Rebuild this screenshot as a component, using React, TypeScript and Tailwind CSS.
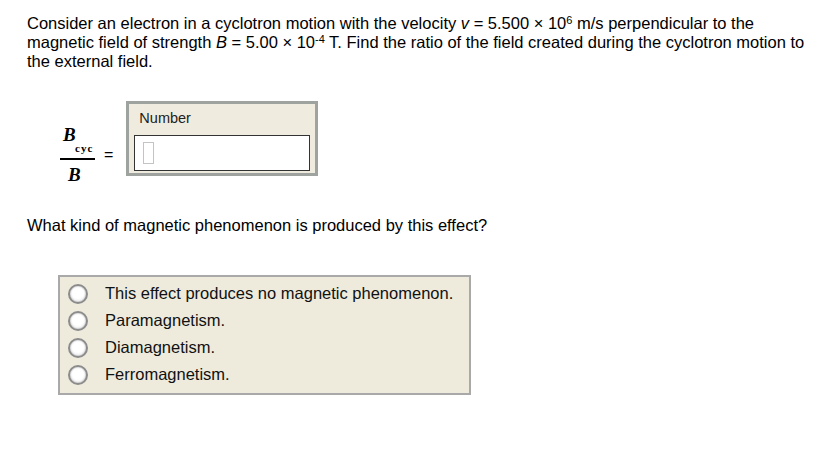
import React from 'react';

const options = [
  'This effect produces no magnetic phenomenon.',
  'Paramagnetism.',
  'Diamagnetism.',
  'Ferromagnetism.',
];

const Radio: React.FC = () => (
  <span className="w-[20px] h-[20px] rounded-full border-[2px] border-[#8c8c8c] bg-[radial-gradient(circle_at_50%_40%,#ffffff_45%,#e6e6e6_100%)] shadow-[inset_0_0_2px_rgba(0,0,0,0.35)] shrink-0" />
);

export default function App() {
  return (
    <div className="w-[823px] h-[459px] bg-white text-black font-['Liberation_Sans',Arial,sans-serif] text-[16.5px] leading-[19px]">
      <div className="pt-[14px] pl-[27px]">
        <p>
          Consider an electron in a cyclotron motion with the velocity <i>v</i> = 5.500 × 10
          <sup className="text-[11px] leading-none">6</sup> m/s perpendicular to the
          <br />
          magnetic field of strength <i>B</i> = 5.00 × 10<sup className="text-[11px] leading-none">-4</sup> T. Find the ratio of the field created during the cyclotron motion to
          <br />
          the external field.
        </p>
      </div>

      <div className="flex items-start mt-[30px] pl-[60px]">
        <div className="flex items-center mt-[24px] font-['Liberation_Serif','Times_New_Roman',serif] font-bold">
          <div className="flex flex-col items-start w-[35px]">
            <span className="italic text-[19px] leading-none pl-[3px]">B</span>
            <span className="text-[11px] leading-none pl-[15px] mt-[-1px] tracking-[1px]">cyc</span>
            <div className="h-[1.5px] w-[35px] bg-black mt-[4px]" />
            <span className="italic text-[19px] leading-none pl-[8px] mt-[5px]">B</span>
          </div>
          <span className="font-['Liberation_Sans',sans-serif] font-normal text-[16px] ml-[9px] mt-[1px]">=</span>
        </div>

        <div className="ml-[13px] w-[192px] h-[75px] bg-[#efecdf] border-[3px] border-[#9fa39f] px-[5px] pt-[6px]">
          <div className="text-[14.5px] leading-[17px] pl-[5px] text-[#222]">Number</div>
          <div className="mt-[8px] h-[36px] bg-white border-[1.5px] border-[#333] flex items-center pl-[8px]">
            <div className="w-[11px] h-[22px] border border-[#c4c4c4]" />
          </div>
        </div>
      </div>

      <p className="mt-[32px] pl-[27px]">What kind of magnetic phenomenon is produced by this effect?</p>

      <div className="ml-[58px] mt-[40px] w-[413px] h-[120px] bg-[#eeebdd] border-[2px] border-[#a9a9a9] pt-[7px] pl-[8px] flex flex-col gap-[7px]">
        {options.map((o) => (
          <div key={o} className="flex items-center h-[20px]">
            <Radio />
            <span className="ml-[17px] text-[#111]">{o}</span>
          </div>
        ))}
      </div>
    </div>
  );
}
